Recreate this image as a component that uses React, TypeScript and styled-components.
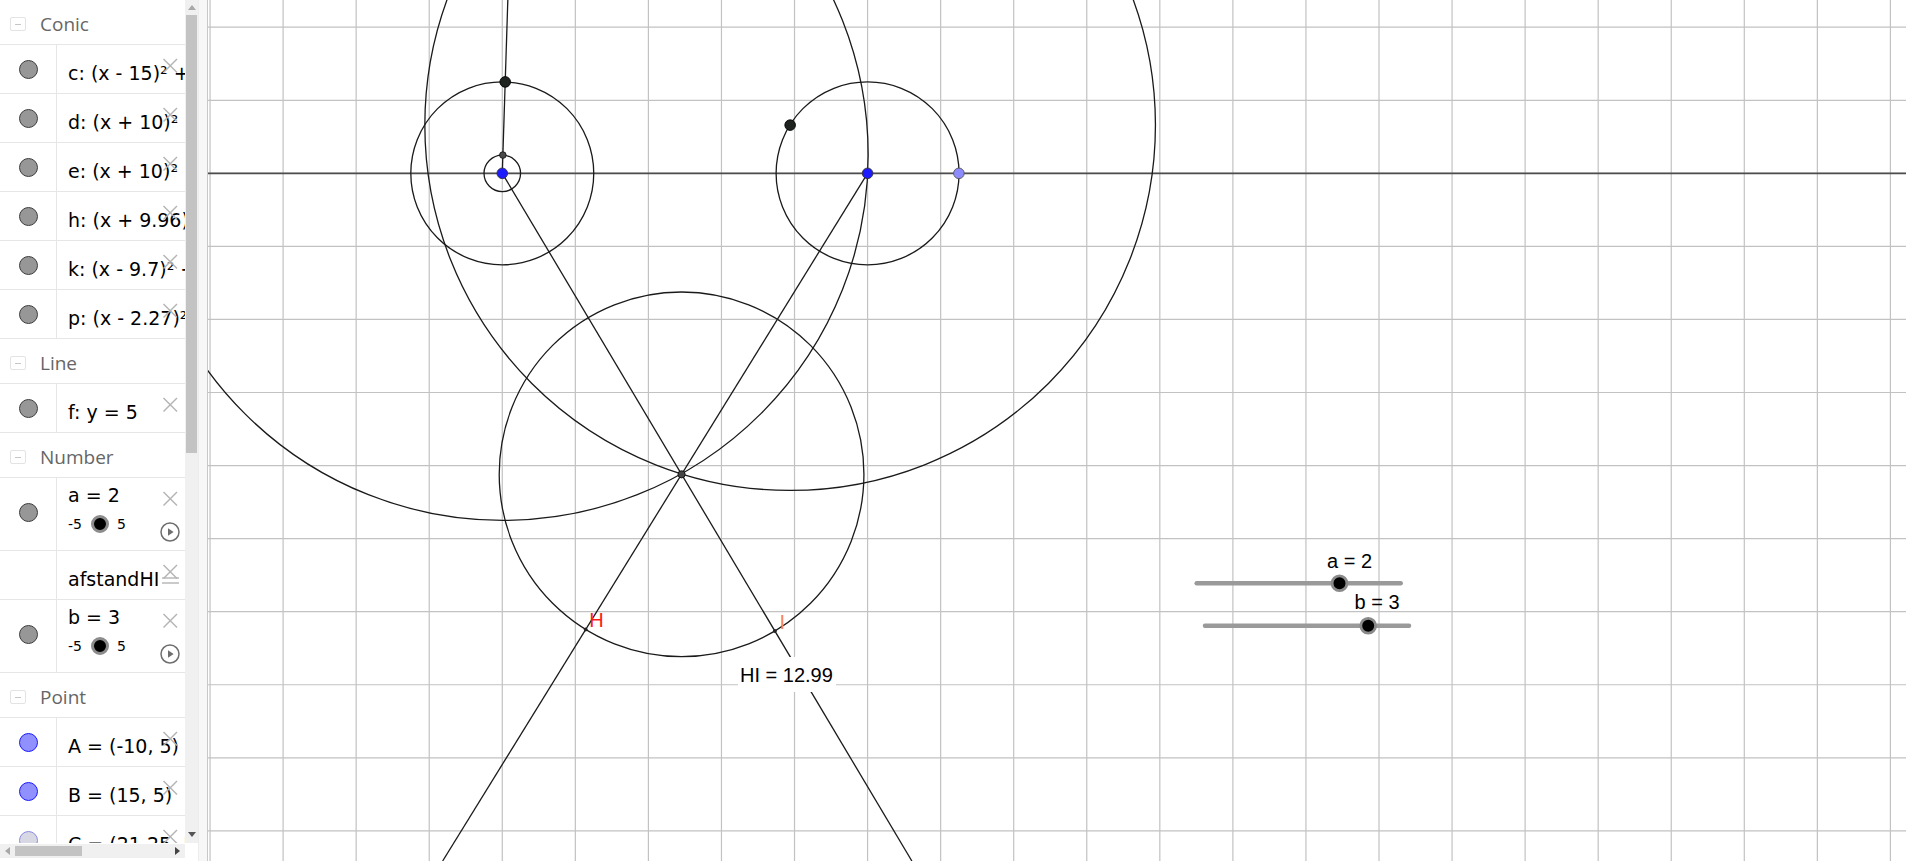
import React from "react";
import styled, { createGlobalStyle } from "styled-components";

const GlobalStyle = createGlobalStyle`
  *, *::before, *::after {
    box-sizing: border-box;
  }

  html, body, #root {
    margin: 0;
    height: 100%;
  }

  body {
    overflow: hidden;
    background: #fff;
    font-family: "DejaVu Sans", "Liberation Sans", sans-serif;
    color: #000;
  }
`;

// graphics view: 14.612 px per unit, grid every 5 units
const SCALE = 14.612;
const OX = 648.4;
const OY = 246.4;
const toX = (u: number) => OX + u * SCALE;
const toY = (v: number) => OY - v * SCALE;

const Page = styled.div`
  display: flex;
  width: 100vw;
  height: 100vh;
`;

const AlgebraPanel = styled.aside`
  width: 198px;
  flex-shrink: 0;
  display: flex;
  flex-direction: column;
  background: #fff;
`;

const PanelBody = styled.div`
  flex: 1;
  min-height: 0;
  display: flex;
`;

const ItemList = styled.div`
  width: 185px;
  overflow: hidden;
`;

const SectionHeader = styled.div`
  height: 45px;
  display: flex;
  align-items: center;
  padding: 4px 0 0 10px;
  border-bottom: 1px solid #e6e6e6;
`;

const CollapseBox = styled.span`
  position: relative;
  width: 16px;
  height: 14px;
  border: 1px solid #e3e3e3;
  border-radius: 2px;

  &::after {
    content: "";
    position: absolute;
    left: 4px;
    right: 4px;
    top: 5.5px;
    height: 1.5px;
    background: #c6c6c6;
  }
`;

const SectionTitle = styled.span`
  margin-left: 14px;
  font-family: "Open Sans", "DejaVu Sans", sans-serif;
  font-size: 19px;
  color: #666;
`;

const ItemRow = styled.div<{ $tall?: boolean }>`
  position: relative;
  display: flex;
  height: ${({ $tall }) => ($tall ? 73 : 49)}px;
  border-bottom: 1px solid #e6e6e6;
`;

const MarbleCell = styled.div<{ $tall?: boolean }>`
  width: 57px;
  flex-shrink: 0;
  display: flex;
  align-items: center;
  justify-content: center;
  border-right: 1px solid #e6e6e6;
  padding-bottom: ${({ $tall }) => ($tall ? 3 : 0)}px;
`;

const Marble = styled.span<{ $fill: string; $edge: string }>`
  width: 19px;
  height: 19px;
  border-radius: 50%;
  background: ${({ $fill }) => $fill};
  border: 1px solid ${({ $edge }) => $edge};
`;

const ItemBody = styled.div`
  flex: 1;
  min-width: 0;
  padding-left: 11px;
  overflow: hidden;
  white-space: nowrap;
`;

const ItemText = styled.div<{ $top: number }>`
  padding-top: ${({ $top }) => $top}px;
  font-size: 19px;
  line-height: 30px;
`;

const MiniSlider = styled.div`
  height: 28px;
  display: flex;
  align-items: center;
  font-size: 14px;
`;

const MiniKnob = styled.span`
  width: 18px;
  height: 18px;
  margin: 0 8px 0 9px;
  border-radius: 50%;
  background: #000;
  border: 3px solid #8c8c8c;
`;

const RowIcon = styled.svg<{ $top: number; $right: number }>`
  position: absolute;
  top: ${({ $top }) => $top}px;
  right: ${({ $right }) => $right}px;
`;

const VScroll = styled.div`
  width: 13px;
  flex-shrink: 0;
  display: flex;
  flex-direction: column;
  align-items: center;
  padding: 5px 0 6px;
  background: #f0f0f0;
`;

const ScrollThumbV = styled.div`
  width: 11px;
  height: 438px;
  margin-top: 5px;
  background: #c3c3c3;
`;

const Spacer = styled.div`
  flex: 1;
`;

const Arrow = styled.span<{ $dir: "up" | "down" | "left" | "right"; $color: string }>`
  width: 0;
  height: 0;
  border-style: solid;
  border-color: transparent;
  ${({ $dir, $color }) =>
    $dir === "up"
      ? `border-width: 0 4px 5px 4px; border-bottom-color: ${$color};`
      : $dir === "down"
      ? `border-width: 5px 4px 0 4px; border-top-color: ${$color};`
      : $dir === "left"
      ? `border-width: 4px 5px 4px 0; border-right-color: ${$color};`
      : `border-width: 4px 0 4px 5px; border-left-color: ${$color};`}
`;

const HScrollRow = styled.div`
  height: 18px;
  padding: 1px 0 3px;
  display: flex;
`;

const HScrollTrack = styled.div`
  width: 185px;
  display: flex;
  align-items: center;
  padding: 0 5px;
  background: #f0f0f0;
`;

const ScrollThumbH = styled.div`
  width: 67px;
  height: 10px;
  margin-left: 5px;
  background: #c3c3c3;
`;

const Splitter = styled.div`
  width: 10px;
  flex-shrink: 0;
  background: #f7f7f7;
  border-left: 1px solid #ececec;
  border-right: 1px solid #c8c8c8;
`;

const GraphicsView = styled.main`
  flex: 1;
  min-width: 0;
  overflow: hidden;
  background: #fff;
`;

const Canvas = styled.svg`
  display: block;
  width: 100%;
  height: 100%;
  font-family: "Liberation Sans", Arial, sans-serif;
`;

/* ---------- algebra view ---------- */

const grayMarble = { fill: "#979797", edge: "#3d3d3d" };
const blueMarble = { fill: "#9090ff", edge: "#1a1aff" };
const paleMarble = { fill: "#d8d8e4", edge: "#8a8ae8" };

type Item =
  | { kind: "plain"; text: string; marble?: { fill: string; edge: string } }
  | { kind: "slider"; text: string }
  | { kind: "hidden"; text: string };

const sections: { title: string; items: Item[] }[] = [
  {
    title: "Conic",
    items: [
      { kind: "plain", text: "c: (x - 15)² + (y - 5)² = 39.19", marble: grayMarble },
      { kind: "plain", text: "d: (x + 10)² + (y - 5)² = 39.19", marble: grayMarble },
      { kind: "plain", text: "e: (x + 10)² + (y - 5)² = 1.56", marble: grayMarble },
      { kind: "plain", text: "h: (x + 9.96)² + (y - 6.25)² = 625", marble: grayMarble },
      { kind: "plain", text: "k: (x - 9.7)² + (y - 8.3)² = 625", marble: grayMarble },
      { kind: "plain", text: "p: (x - 2.27)² + (y + 15.6)² = 155.75", marble: grayMarble },
    ],
  },
  {
    title: "Line",
    items: [{ kind: "plain", text: "f: y = 5", marble: grayMarble }],
  },
  {
    title: "Number",
    items: [
      { kind: "slider", text: "a = 2" },
      { kind: "hidden", text: "afstandHI" },
      { kind: "slider", text: "b = 3" },
    ],
  },
  {
    title: "Point",
    items: [
      { kind: "plain", text: "A = (-10, 5)", marble: blueMarble },
      { kind: "plain", text: "B = (15, 5)", marble: blueMarble },
      { kind: "plain", text: "C = (21.25, 5)", marble: paleMarble },
    ],
  },
];

function DeleteIcon({ withBars }: { withBars?: boolean }) {
  return (
    <RowIcon $top={13} $right={6} width="17" height="21" viewBox="0 0 17 21">
      <g stroke="#b4b4b4" strokeWidth="1.4" fill="none">
        <line x1="1.5" y1="1" x2="15" y2="14.5" />
        <line x1="15" y1="1" x2="1.5" y2="14.5" />
        {withBars && (
          <>
            <line x1="0" y1="14" x2="17" y2="14" />
            <line x1="0" y1="19" x2="17" y2="19" />
          </>
        )}
      </g>
    </RowIcon>
  );
}

function PlayIcon() {
  return (
    <RowIcon $top={44} $right={5} width="20" height="20" viewBox="0 0 20 20">
      <circle cx="10" cy="10" r="9" fill="none" stroke="#6e6e6e" strokeWidth="1.5" />
      <path d="M8 6.2 L13.6 10 L8 13.8 Z" fill="#6e6e6e" />
    </RowIcon>
  );
}

function AlgebraItem({ item }: { item: Item }) {
  if (item.kind === "slider") {
    return (
      <ItemRow $tall>
        <MarbleCell $tall>
          <Marble $fill={grayMarble.fill} $edge={grayMarble.edge} />
        </MarbleCell>
        <ItemBody>
          <ItemText $top={2}>{item.text}</ItemText>
          <MiniSlider>
            -5
            <MiniKnob />5
          </MiniSlider>
        </ItemBody>
        <DeleteIcon />
        <PlayIcon />
      </ItemRow>
    );
  }
  return (
    <ItemRow>
      <MarbleCell>
        {item.kind === "plain" && item.marble && (
          <Marble $fill={item.marble.fill} $edge={item.marble.edge} />
        )}
      </MarbleCell>
      <ItemBody>
        <ItemText $top={13}>{item.text}</ItemText>
      </ItemBody>
      <DeleteIcon withBars={item.kind === "hidden"} />
    </ItemRow>
  );
}

/* ---------- graphics view ---------- */

type Pt = { x: number; y: number };

const A: Pt = { x: toX(-10), y: toY(5) };
const B: Pt = { x: toX(15), y: toY(5) };
const C: Pt = { x: toX(21.25), y: toY(5) };
const hC: Pt = { x: toX(-9.96), y: toY(6.25) };
const kC: Pt = { x: toX(9.7), y: toY(8.3) };
const P: Pt = { x: toX(2.27), y: toY(-15.6) };
const R_BIG = 25 * SCALE;
const R_MID = 6.26 * SCALE;
const R_P = 12.48 * SCALE;
const R_SMALL = Math.hypot(hC.x - A.x, hC.y - A.y);

const along = (from: Pt, to: Pt, dist: number): Pt => {
  const len = Math.hypot(to.x - from.x, to.y - from.y);
  return { x: from.x + ((to.x - from.x) / len) * dist, y: from.y + ((to.y - from.y) / len) * dist };
};

// ray from `from` through `via`, cut at the horizontal line y = edgeY
const rayEnd = (from: Pt, via: Pt, edgeY: number): Pt => {
  const t = (edgeY - from.y) / (via.y - from.y);
  return { x: from.x + (via.x - from.x) * t, y: edgeY };
};

const dTop = along(A, hC, R_MID);
const H = along(B, P, Math.hypot(P.x - B.x, P.y - B.y) + R_P);
const I = along(A, P, Math.hypot(P.x - A.x, P.y - A.y) + R_P);

const VIEW_X = 208;
const VIEW_W = 1698;
const VIEW_H = 861;
const GRID = 5 * SCALE;

function Grid() {
  const xs: number[] = [];
  const ys: number[] = [];
  for (let k = -10; k <= 20; k++) {
    const x = OX + k * GRID;
    if (x >= VIEW_X && x <= VIEW_X + VIEW_W) xs.push(x);
  }
  for (let k = -5; k <= 10; k++) {
    const y = OY + k * GRID;
    if (y >= 0 && y <= VIEW_H) ys.push(y);
  }
  return (
    <g stroke="#c2c2c2" strokeWidth="1.2">
      {xs.map((x) => (
        <line key={`v${x}`} x1={x} y1={0} x2={x} y2={VIEW_H} />
      ))}
      {ys.map((y) => (
        <line key={`h${y}`} x1={VIEW_X} y1={y} x2={VIEW_X + VIEW_W} y2={y} />
      ))}
    </g>
  );
}

function GeoPoint({ at, r, fill, stroke }: { at: Pt; r: number; fill: string; stroke: string }) {
  return <circle cx={at.x} cy={at.y} r={r} fill={fill} stroke={stroke} strokeWidth="0.9" />;
}

function CanvasSlider({
  x,
  y,
  length,
  value,
  label,
  labelX,
  labelY,
}: {
  x: number;
  y: number;
  length: number;
  value: number;
  label: string;
  labelX: number;
  labelY: number;
}) {
  const tx = x + ((value + 5) / 10) * length;
  return (
    <g>
      <line x1={x} y1={y} x2={x + length} y2={y} stroke="#9a9a9a" strokeWidth="4.5" strokeLinecap="round" />
      <circle cx={tx} cy={y} r={7.4} fill="#000" stroke="#8a8a8a" strokeWidth="2.8" />
      <text x={labelX} y={labelY} fontSize="20" fill="#000">
        {label}
      </text>
    </g>
  );
}

function Construction() {
  const up = rayEnd(A, hC, 0);
  const downA = rayEnd(A, P, VIEW_H);
  const downB = rayEnd(B, P, VIEW_H);
  return (
    <Canvas viewBox={`${VIEW_X} 0 ${VIEW_W} ${VIEW_H}`}>
      <rect x={VIEW_X} y={0} width={VIEW_W} height={VIEW_H} fill="#fff" />
      <Grid />
      <line x1={VIEW_X} y1={A.y} x2={VIEW_X + VIEW_W} y2={A.y} stroke="#4d4d4d" strokeWidth="1.8" />

      <g fill="none" stroke="#1a1a1a" strokeWidth="1.3">
        <circle cx={A.x} cy={A.y} r={R_MID} />
        <circle cx={A.x} cy={A.y} r={R_SMALL} />
        <circle cx={B.x} cy={B.y} r={R_MID} />
        <circle cx={hC.x} cy={hC.y} r={R_BIG} />
        <circle cx={kC.x} cy={kC.y} r={R_BIG} />
        <circle cx={P.x} cy={P.y} r={R_P} />
        <line x1={A.x} y1={A.y} x2={up.x} y2={up.y} />
        <line x1={A.x} y1={A.y} x2={downA.x} y2={downA.y} />
        <line x1={B.x} y1={B.y} x2={downB.x} y2={downB.y} />
      </g>

      <rect x={738} y={657} width={98} height={35} fill="#fff" />
      <text x={740} y={682} fontSize="20" fill="#000">
        HI = 12.99
      </text>

      <text x={H.x + 3.5} y={H.y - 2.5} fontSize="20" fill="#ff1a1a">
        H
      </text>
      <text x={I.x + 4.5} y={I.y - 2.5} fontSize="20" fill="#f5845c">
        I
      </text>

      <GeoPoint at={dTop} r={5.3} fill="#1e231f" stroke="#000" />
      <GeoPoint at={kC} r={5.3} fill="#1e231f" stroke="#000" />
      <GeoPoint at={hC} r={3.3} fill="#4a4a4a" stroke="#1a1a1a" />
      <GeoPoint at={P} r={3.6} fill="#454545" stroke="#111" />
      <GeoPoint at={H} r={1.5} fill="#222" stroke="#222" />
      <GeoPoint at={I} r={1.5} fill="#222" stroke="#222" />
      <GeoPoint at={A} r={5.3} fill="#1c1cff" stroke="#333" />
      <GeoPoint at={B} r={5.3} fill="#1c1cff" stroke="#333" />
      <GeoPoint at={C} r={5.3} fill="#8c8cff" stroke="#555" />

      <CanvasSlider x={1196.7} y={583.3} length={204} value={2} label="a = 2" labelX={1327} labelY={568} />
      <CanvasSlider x={1205} y={625.7} length={204} value={3} label="b = 3" labelX={1354.5} labelY={609.3} />
    </Canvas>
  );
}

function App() {
  return (
    <>
      <GlobalStyle />
      <Page>
        <AlgebraPanel>
          <PanelBody>
            <ItemList>
              {sections.map((section) => (
                <React.Fragment key={section.title}>
                  <SectionHeader>
                    <CollapseBox />
                    <SectionTitle>{section.title}</SectionTitle>
                  </SectionHeader>
                  {section.items.map((item) => (
                    <AlgebraItem key={item.text} item={item} />
                  ))}
                </React.Fragment>
              ))}
            </ItemList>
            <VScroll>
              <Arrow $dir="up" $color="#a8a8a8" />
              <ScrollThumbV />
              <Spacer />
              <Arrow $dir="down" $color="#555" />
            </VScroll>
          </PanelBody>
          <HScrollRow>
            <HScrollTrack>
              <Arrow $dir="left" $color="#a8a8a8" />
              <ScrollThumbH />
              <Spacer />
              <Arrow $dir="right" $color="#444" />
            </HScrollTrack>
          </HScrollRow>
        </AlgebraPanel>
        <Splitter />
        <GraphicsView>
          <Construction />
        </GraphicsView>
      </Page>
    </>
  );
}

export default App;
